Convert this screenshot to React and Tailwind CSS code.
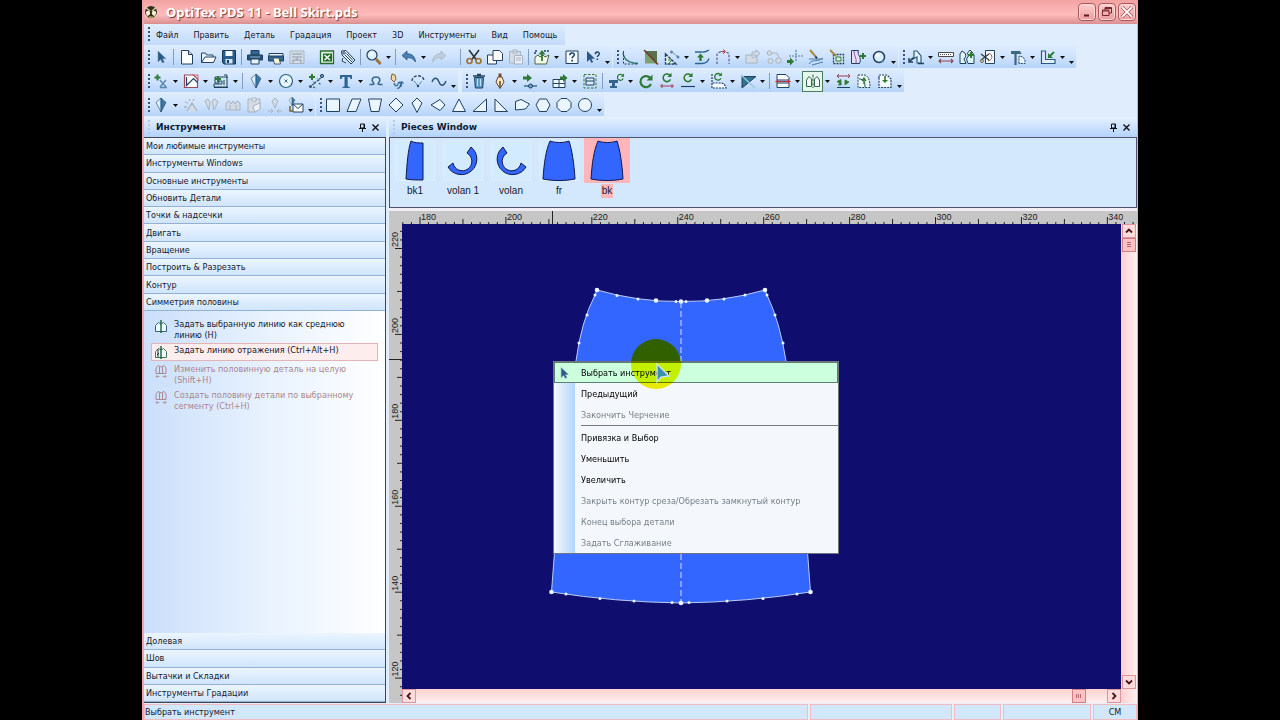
import { useState } from "react";

const NAVY = "#1f4263";
const GREEN = "#2c7a34";
const PALE = "#eaf5ff";
const GREY = "#a9b4c2";
const GREYFILL = "#d3dbe5";

const G = ({ children, s = NAVY, f = "none", w = 1 }) => (
  <g stroke={s} fill={f} strokeWidth={w}>
    {children}
  </g>
);

const PlusMark = ({ x, y }) => (
  <path d={`M${x - 3} ${y}h6M${x} ${y - 3}v6`} stroke={GREEN} strokeWidth="2" fill="none" />
);

const Dart = ({ a = "#3a7ba6", b = "#d6f0fc", s = NAVY }) => (
  <>
    <path d="M10 2 5 6.500 10 16z" fill={b} stroke={s} strokeWidth="0.6" />
    <path d="M10 2l5 4.500L10 16z" fill={a} stroke={s} strokeWidth="0.6" />
  </>
);

const Turn = ({ s = 1, x = 0, y = 0 }) => (
  <g transform={`translate(${x} ${y}) scale(${s})`}>
    <path d="M14.5 6.5A5.5 5.5 0 1 0 15 12" fill="none" stroke={GREEN} strokeWidth="2.2" />
    <path d="M16.5 2.5v6h-6z" fill={GREEN} />
  </g>
);

const icons = {
  arrow: <path d="M7 3v11l2.600-2.500L11.500 15l1.800-.9-1.800-3.400H15z" fill="#285a85" stroke="#6d8fae" strokeWidth="0.6" />,
  newFile: <G f="#fff"><path d="M4.500 2.500h7l4 4v9.500h-11z" /><path d="M11.500 2.500v4h4" fill="#b5d3ee" /></G>,
  open: <G f={PALE}><path d="M3.500 14.500V5h4l1 2H15v2" /><path d="M3.500 14.500 7 9h11l-2.500 5.500z" fill="#fff" /></G>,
  save: <><path d="M3.500 2.500h13v13.500H5L3.500 14.500z" fill="#2b5d8c" stroke="#173958" /><path d="M6.500 3h7v5h-7z" fill="#f4fbff" /><path d="M6.500 11h7v4.500h-7z" fill="#cfe3f4" /><path d="M8 12h2v3H8z" fill="#173958" /></>,
  printer: <><path d="M6 2.500h8V7H6z" fill="#356693" stroke={NAVY} /><path d="M2.500 7h15v5h-15z" fill="#264f78" stroke={NAVY} /><path d="M6 11h8v5H6z" fill="#e8f3ff" stroke={NAVY} /><path d="M5 9h10" stroke="#8fb2d2" /></>,
  plotter: <><path d="M3 5.500h14v3H3z" fill={PALE} stroke={NAVY} /><path d="M2.500 8h15v5h-15z" fill="#346591" stroke={NAVY} /><path d="M7 10h6l1.500 6h-6z" fill="#f7f3cf" stroke={NAVY} strokeWidth="0.8" /></>,
  card: <G s={GREY} f={GREYFILL}><path d="M3 3h14v12.500H3z" /><path d="M5 6h10M5 9h10M6 15v-3h8v3M10 9v3" stroke="#8d9aab" /></G>,
  excel: <><path d="M3.500 3h13v12.500h-13z" fill="#dff2de" stroke="#2c6a35" strokeWidth="1.300" /><path d="M6 5.500h9v8H6z" fill="#256b2e" /><path d="m7.500 7 5.500 5M13 7l-5.500 5" stroke="#fff" strokeWidth="1.400" /></>,
  tag: <G f={PALE}><path d="M3.500 3 8 2.500l9 9.500-4 4-9-9z" /><path d="M7 7l7 7M8.500 5.500l6.500 7" /><circle cx="6" cy="5" r="1.200" fill="#fff" /><path d="M5 10l-1 3 4 2" /></G>,
  zoom: <><circle cx="8" cy="7" r="5" fill="#dff3ff" stroke={NAVY} strokeWidth="1.200" /><path d="M6 7.500 9 4.500" stroke="#fff" strokeWidth="1.500" /><path d="m12 11 4.500 5" stroke="#a06e32" strokeWidth="2.800" /></>,
  undo: <path d="M3 7.500 8 3v2.800c5 0 8 2.500 8.500 8.200C14.500 10.800 12 9.500 8 9.600V12z" fill="#4b82b3" stroke="#285580" strokeWidth="0.800" />,
  redo: <path d="M17 7.500 12 3v2.800c-5 0-8 2.500-8.500 8.200C5.500 10.800 8 9.500 12 9.600V12z" fill="#c0cedd" stroke="#a4b6c9" strokeWidth="0.800" />,
  cut: <><path d="m5 2 7.500 10M15 2 7.500 12" stroke="#2f363d" strokeWidth="1.700" /><g fill="none" stroke="#9a7430" strokeWidth="1.600"><circle cx="5.500" cy="13" r="2.500" /><circle cx="14.500" cy="13" r="2.500" /></g></>,
  copy: <G f="#fff"><path d="M2.500 7h9v9h-9z" /><path d="M8 2.500h6.500l3 3v7H8z" /></G>,
  paste: <G s={GREY} f={GREYFILL}><path d="M3.500 3.500h11V15h-11z" /><path d="M7 2h4v3H7z" /><path d="M8.500 7.500h8V16h-8z" fill="#e9eef4" /><path d="M10 10h5M10 12h5" /></G>,
  exportPiece: <><path d="M3 9l3-2 2 2 3-2 2 2 4-2-2.500 9H3z" fill="#f2f8ec" stroke="#58683e" /><path d="M10 13V5" stroke={GREEN} strokeWidth="1.800" /><path d="M10 2 6.500 6.500h7z" fill={GREEN} /><path d="M3 6V3h3M12 3h5" stroke={NAVY} strokeWidth="1.500" strokeDasharray="2 1" /></>,
  help: <><path d="M4 3h12v12.500H4z" fill="#f5faff" stroke={NAVY} /><path d="M7.800 7.200c0-3 4.600-3 4.600-.4 0 1.500-2.300 1.600-2.300 3.400" fill="none" stroke={NAVY} strokeWidth="1.500" /><path d="M9.300 11.800h1.700v1.600H9.300z" fill={NAVY} /></>,
  whatsThis: <><path d="M4 3v11l2.600-2.500L8.500 15l1.600-.9-1.700-3.400H12z" fill="#285a85" /><path d="M12.300 6.200c0-2.900 4-2.900 4-.3 0 1.500-2 1.600-2 3.100" fill="none" stroke={NAVY} strokeWidth="1.400" /><path d="M13.600 10.500h1.500V12h-1.500z" fill={NAVY} /></>,

  curve: <><path d="M3 5C4 12 9 15 18 15.500" fill="none" stroke="#2b7260" strokeWidth="1.400" /><path d="M3.500 3v13H18" stroke={NAVY} strokeDasharray="2 1.500" fill="none" /></>,
  colorSwap: <><path d="M4 3h12v12.500z" fill="#5b6f48" /><path d="M4 3v12.500h12z" fill="#7fa070" /><path d="M3 2l14 14.500" stroke="#6b3a2a" strokeWidth="1.600" /></>,
  measure: <><path d="M3.500 6v10H14z" fill="#dff0e8" stroke={NAVY} strokeWidth="1.400" strokeDasharray="3 1" /><path d="m9 3 8 7" stroke="#477a9f" strokeDasharray="2 1" /><circle cx="9.500" cy="4" r="1.500" fill="#5588ad" /><circle cx="16" cy="9" r="1.500" fill="#5588ad" /><path d="M6 12h4l-3 3" stroke={GREEN} fill="none" /></>,
  merge: <><path d="M3 4h6c4 1 6-1 8-2M3 15.500h7c4 0 6-2 7-5" fill="none" stroke="#29639a" strokeWidth="1.300" /><path d="M8.500 13V9" stroke={GREEN} strokeWidth="2.400" /><path d="M8.500 5.500 5 9.500h7z" fill={GREEN} /></>,
  arch: <><path d="M4 16V6c2-3 10-3 12 0v10" fill="none" stroke="#5f5b93" strokeDasharray="2.500 1.500" strokeWidth="1.200" /><path d="M8 3.500h4M10 1.500l2.500 2L10 6" stroke="#b5434d" fill="none" /></>,
  greyPiece: <G s={GREY} f={GREYFILL}><path d="M3 7h5l2 3 4-2v7H3z" /><path d="M9 4h4V2l4 3.500-4 3V7H9z" /></G>,
  greyGroup: <G s={GREY} f={GREYFILL}><circle cx="5.500" cy="5" r="2.300" /><circle cx="6.500" cy="13" r="2.500" /><circle cx="14.500" cy="12.500" r="2.800" /><path d="M8 5h5l2 4" /></G>,
  crossPlus: <><path d="M11 2v12M4 8h14" stroke="#57839f" strokeDasharray="2 1" strokeWidth="1.200" /><path d="M2 12h3v-2.500l4 4-4 4V15H2z" fill={GREEN} /></>,
  drawLine: <><path d="M3 16c4-6 8-1 14-6M3 11h14M6 17l11-3" fill="none" stroke="#4a7da5" /><path d="m4 2 6 7" stroke="#a88b3f" strokeWidth="2" /><path d="m9.500 8.500 1.500 2" stroke={NAVY} strokeWidth="2" /></>,
  drawSelect: <><path d="M6.500 6.500h10v9h-10z" fill="#d7eaf2" stroke={NAVY} strokeDasharray="2 1" strokeWidth="1.300" /><path d="M9 9h5v4H9z" fill="none" stroke={GREEN} /><path d="m3 2 6 6" stroke="#a88b3f" strokeWidth="1.800" /></>,
  addPiece: <><path d="M3.500 2.500h7c-2 4 4 7 1 13h-8z" fill="#e9ddf5" stroke={NAVY} /><path d="M6 3c0 5 3 7 2 12" fill="none" stroke="#8065a5" /><PlusMark x={15} y={8} /></>,
  ring: <><circle cx="10" cy="9" r="5.500" fill="#dcefff" stroke={NAVY} strokeWidth="1.500" /><circle cx="8.500" cy="7" r="2" fill="#fff" /><path d="M12 14.500l3-2" stroke="#6088ad" strokeWidth="1.500" /></>,

  walk: <><path d="M5 12l3-3V3h3l4 5v7h-4V9z" fill="#e4f3f7" stroke="#325b7b" strokeWidth="1.200" /><path d="M3 10v4h4M3 14l4-4M12 15.500h6" stroke={NAVY} strokeWidth="1.500" fill="none" /></>,
  ruler: <><path d="M2.500 4.500h15v4h-15z" fill="#fff" stroke="#494a4b" /><path d="M4 6.500h12" stroke="#494a4b" strokeDasharray="1 1" /><path d="M3 13h14M5 11l-2 2 2 2M15 11l2 2-2 2" stroke="#934350" fill="none" strokeWidth="1.100" /></>,
  pieces: <G f="#e2f6f8"><path d="M3 15.500V6l2-3 3 2 1 3-2 3 2 4.500z" /><path d="M11 15.500 9.500 11l2-3-1-3 2.500-3 2 2 2 3v8.500z" /><PlusMark x={14} y={7} /></G>,
  cutPiece: <><path d="M7.500 2.500h9v13h-9z" fill="#fff" stroke={NAVY} /><path d="M10 13c5-1 5-6 1-8" fill="none" stroke="#a25546" /><path d="m3 6 8 6M3 12l8-6" stroke="#2f363d" strokeWidth="1.200" /><circle cx="4" cy="13" r="1.500" fill="none" stroke="#8c6930" /></>,
  hammer: <><path d="M3 3h9l1.500 3H3z" fill="#3d6585" /><path d="M7.500 5v12" stroke="#3d6585" strokeWidth="2.200" /><path d="M11 15.500V8l4 1 2 3v3.500z" fill="#eaf7ff" stroke={NAVY} strokeDasharray="2 1" /></>,
  corner: <><path d="M3.500 3h4v8.500H17v4H3.500z" fill="#dff0ff" stroke="#285a85" strokeWidth="1.200" /><path d="m16 4-4 4" stroke={GREEN} strokeWidth="1.800" /><path d="M10 10V5l5 5z" fill={GREEN} /></>,

  plusCross: <><PlusMark x={6.500} y={5.500} /><path d="m9 8 6 7M15 8l-6 7M9 15.500h7" stroke="#5a87ad" strokeWidth="1.400" /></>,
  pageCut: <><path d="M3.500 3h9l4 4v8.500h-13z" fill="#fff" stroke="#9a4a58" strokeWidth="1.200" /><path d="M5.500 5v8.500l7-7 4 4" fill="none" stroke={NAVY} strokeWidth="1.200" /><path d="M11 3h6v6" stroke="#d5636d" fill="none" /></>,
  machine: <><path d="M4 5h12v10H3v-3h8V9H8v2H4z" fill="#cfe4f2" stroke={NAVY} /><path d="M13 8v5M3 15.500h14" stroke={NAVY} /><PlusMark x={7} y={7} /><path d="M13 3h3v3" stroke={NAVY} fill="none" /></>,
  dart: <Dart />,
  circle: <><circle cx="10" cy="9" r="6.500" fill="#e8f7ff" stroke="#2c6384" strokeWidth="1.200" /><path d="m8.500 7.500 3 3M11.500 7.500l-3 3" stroke="#3a7396" /></>,
  nodes: <><path d="M4 15 17 4M9 12l-2-3M13 9l-2-3M7 15l3 1M13 11l2 2" stroke="#35597a" strokeDasharray="2 1" strokeWidth="1.300" /><circle cx="4.500" cy="14.500" r="1.500" fill="#35597a" /><circle cx="16" cy="4" r="1.600" fill="#6c98bd" stroke={NAVY} /><PlusMark x={6} y={5} /></>,
  letter: <path d="M4 3h12v4h-1.500L13.500 5H11.700v9.500l2 .5v1H6.500v-1l2-.5V5H6.500L5.500 7H4z" fill="#2d6594" />,
  omega: <path d="M3.500 12.500c4 0 5 0 4-1.500C5 8 6 5 10 5s5 3 2.500 6c-1 1.500 0 1.500 4 1.500" fill="none" stroke="#31658c" strokeWidth="1.500" />,
  swirl: <><path d="M5 2l3 1 1 4-2 3-3-3z" fill="#f1d8a6" stroke="#7d6136" /><path d="M7 11c1 4 4 3 4 1s4-3 3 0-2 5-4 4M12 11h5M15 9l-1 6" fill="none" stroke="#31658c" strokeWidth="1.200" /></>,
  dottedArc: <><path d="M4 9c0-7 12-7 12 0" fill="none" stroke={NAVY} strokeWidth="1.300" strokeDasharray="3 1.500" /><path d="m6 9 4 5 4-5" fill="none" stroke="#31658c" strokeDasharray="2 1" /><circle cx="10" cy="14" r="1.200" fill={NAVY} /></>,
  wave: <path d="M3 10c2-5 5-5 7 0s5 4 7-1" fill="none" stroke="#2b5478" strokeWidth="1.400" />,

  trash: <><path d="M5.500 5.500h9L13.700 16H6.300z" fill="#5e99c6" stroke={NAVY} /><path d="M4 4h12M8 2.500h4" stroke={NAVY} strokeWidth="1.500" /><path d="M8.500 7v7M11.500 7v7" stroke="#c5e2f5" /></>,
  pen: <><path d="M8.500 1.500h3V5h-3z" fill="#704b2e" /><path d="M8 5h4l2 5-4 6.500L6 10z" fill="#fae6c0" stroke="#61462c" /><path d="M10 9v7" stroke="#61462c" strokeWidth="1.500" /></>,
  moveNode: <><path d="M3 4.500h4V2l5 4-5 4V7.500H3z" fill={GREEN} /><path d="M4 14h13" stroke="#2b6086" strokeWidth="1.300" /><circle cx="10.500" cy="14" r="2" fill="#6ca1cb" stroke={NAVY} /></>,
  moveGrid: <><path d="M3 7.500h12v8H3zM3 11.500h12M9 7.500v8" fill="#eef7ff" stroke={NAVY} /><path d="M10 4.500h3V2l4.500 4L13 10V7.500h-3z" fill={GREEN} /></>,
  selectBox: <><path d="M4 2.500h12v13.500H4z" fill="none" stroke={GREEN} strokeDasharray="2.500 1.500" /><path d="M6 6h8v7H6zM6 9h8" fill="#dcebf8" stroke={NAVY} /></>,
  rotateText: <><path d="M3 8h9v3H9v3h2v2H4v-2h2v-3H3z" fill="#32648e" /><Turn s={0.55} x={9} y={0} /></>,
  turn: <Turn />,
  turnRed: <><Turn s={0.7} x={3} y={-1} /><path d="M3 14h14M5 12v4M15 12v4" stroke="#a73f4c" /></>,
  turnLine: <><Turn s={0.7} x={3} y={-1} /><path d="M3 14.500h14" stroke={NAVY} strokeWidth="1.200" /></>,
  turnPiece: <><path d="M4 2v14h14c-1-4-3-5-6-5H4" fill="#f2faff" stroke={NAVY} strokeDasharray="2 1" strokeWidth="1.200" /><Turn s={0.600} x={4} y={-1} /></>,
  flip: <><path d="M4 4.500h14L4 16z" fill="#2e7390" stroke={NAVY} /><path d="m3 3 14 13" stroke="#9cc7dc" strokeWidth="1.500" /></>,
  foldPage: <><path d="M4 2.500h9l3 3V8H4zM4 11h12v4.500H4z" fill="#fff" stroke={NAVY} /><path d="M3 9.500h14M5 8l-2 1.500L5 11M15 8l2 1.500-2 1.500" stroke="#b63b3f" fill="none" strokeWidth="1.200" /></>,
  mirror: <><path d="M8.500 14.500h-5V8L6 4.500 8.500 7zM11.500 14.500h5V8L14 4.500 11.500 7z" fill="#f4fffa" stroke="#2d6848" /><path d="M10 2.500v13.500" stroke="#27553a" strokeDasharray="3 1" /></>,
  swapPieces: <><path d="M4 4h13M6 2l-2 2 2 2M15 2l2 2-2 2" stroke="#91434d" fill="none" /><path d="M4 15.500h13" stroke={NAVY} /><path d="M4 9.500l4-2v5zM8 11v2H5M16 10l-4-2v5z" fill={GREEN} stroke={GREEN} strokeWidth="0.800" /></>,
  piecePath: <><path d="M4 3h7c4 2 5 6 5 12.500H4z" fill="#edf8f4" stroke={NAVY} strokeDasharray="2 1" /><path d="M5 7c5 0 6 3 6 8" fill="none" stroke={NAVY} /><path d="M10 12V7M8 9l2-3 2 3" stroke={GREEN} fill="none" strokeWidth="1.300" /></>,
  pieceDown: <><path d="M4 6V3h8l4 4v8.500H4V6" fill="#f4faff" stroke={NAVY} strokeDasharray="2 1" strokeWidth="1.200" /><path d="M10 4v4" stroke={GREEN} strokeWidth="1.600" /><path d="M7 8h6l-3 3z" fill={GREEN} /></>,

  wand: <G s={GREY} f={GREYFILL} w={1.3}><path d="m6 15 5-8 5 8M8 3l1 2M13 3l-1 2M4 6l3 1M3 11h3" /></G>,
  greyDarts: <G s={GREY} f={GREYFILL}><path d="M6 3 3 5l4 9 1-8zM13 3l-3 2 2 9 4-8z" /></G>,
  greyMirror: <G s={GREY} f={GREYFILL}><path d="M3 14V7l3-2 2 3 2-3 2 3 2-3 3 2v7zM7 9v5M13 9v5" /></G>,
  greyPage: <G s={GREY} f={GREYFILL}><path d="M4 3h12v9l-4 4H4z" /><path d="M8 2h4v3H8zM9 10l7-3v6l-5 3z" fill="#eef2f7" /></G>,
  greyDart: <G s={GREY} f={GREYFILL}><path d="M10 2 7 5l3 7 3-7zM3 15h5M12 15h5M6 13l2 2-2 2M14 13l-2 2 2 2" /></G>,
  dartMail: <><g transform="scale(.6)"><Dart /></g><path d="M7 8h10v8H7z" fill="#fff" stroke={NAVY} /><path d="m7 8 5 4.500L17 8" fill="none" stroke={NAVY} /><path d="M4 10v5h3" stroke="#7a5f31" fill="none" strokeWidth="1.500" /></>,

  square: <G f={PALE}><path d="M3.500 3h13v12.500h-13z" /></G>,
  parallelogram: <G f={PALE}><path d="M8 3h9l-5 12.500H3z" /></G>,
  trapezoid: <G f={PALE}><path d="M3.500 3h13L14 15.500H6z" /></G>,
  diamond: <G f={PALE}><path d="m10 2 7 7-7 7-7-7z" /></G>,
  kite: <G f={PALE}><path d="m10 2 5 5-5 9.500L5 7z" /></G>,
  flatKite: <G f={PALE}><path d="M12 3.500 17 9l-5 5.500L3 9z" /></G>,
  triangle: <G f={PALE}><path d="m10 3 6.500 12.500h-13z" /></G>,
  rightA: <G f={PALE}><path d="M16.500 3v12.500H3z" /></G>,
  rightB: <G f={PALE}><path d="M4 3v12.500h12.500z" /></G>,
  pentagon: <G f={PALE}><path d="M3.500 5.500 9 3.500 17.500 8l-4 5-10 1z" /></G>,
  hexagon: <G f={PALE}><path d="M6.500 3h7L17 9l-3.500 6.500h-7L3 9z" /></G>,
  octagon: <G f={PALE}><path d="M7 2.500h6l4 4v5l-4 4H7l-4-4v-5z" /></G>,
  roundShape: <G f={PALE}><circle cx="10" cy="9" r="6.500" /></G>,
};

// "|" is a separator, "v" a drop-down arrow, "_" a blank slot, "!" before a name marks the active tool
const toolRows = [
  {
    gap: "gap-px",
    groups: [
      "arrow | newFile open save | printer plotter card _ excel tag | zoom v | undo v redo _ | cut copy paste | exportPiece v help whatsThis",
      "curve colorSwap measure v merge arch v greyPiece greyGroup crossPlus drawLine drawSelect addPiece ring",
      "walk v ruler pieces cutPiece v hammer v corner v",
    ],
  },
  {
    gap: "gap-1",
    groups: [
      "plusCross v pageCut v machine v | dart v circle v nodes v letter v omega swirl dottedArc wave",
      "trash pen v moveNode v moveGrid v selectBox | rotateText v turn turnRed turnLine v turnPiece v flip v | foldPage v !mirror v swapPieces piecePath pieceDown",
    ],
  },
  {
    gap: "gap-px",
    groups: [
      "dart v wand greyDarts greyMirror greyPage greyDart dartMail",
      "square parallelogram trapezoid diamond kite flatKite triangle rightA rightB pentagon hexagon octagon roundShape",
    ],
  },
];

const Caret = () => (
  <svg width="5" height="3" viewBox="0 0 5 3">
    <path d="M0 0h5L2.500 3z" fill="#111" />
  </svg>
);

const Grip = ({ color = "#3c5573" }) => (
  <svg width="6" height="15" viewBox="0 0 6 15" className="shrink-0">
    <path d="M4 1h2M4 5h2M4 9h2M4 13h2" stroke={color} strokeWidth="2" />
  </svg>
);

const ToolGroup = ({ spec }) => (
  <div className="flex h-[22px] items-center bg-linear-to-b from-[#dcebff] via-[#cfe3fd] to-[#b5d3f7]">
    <Grip />
    {spec.split(" ").map((token, i) => {
      if (token === "|") return <span key={i} className="ml-0.5 mr-0.5 h-4 w-px bg-[#7e9dc2]" />;
      if (token === "_") return <span key={i} className="w-[9px]" />;
      if (token === "v")
        return (
          <button key={i} aria-label="Список" className="flex h-[21px] w-[9px] items-center justify-center">
            <Caret />
          </button>
        );
      const active = token[0] === "!";
      const name = active ? token.slice(1) : token;
      return (
        <button
          key={i}
          aria-label={name}
          className={`flex h-[21px] w-[21px] items-center justify-center ${
            active ? "border border-[#4c7b62] bg-[#e4f8ee]" : ""
          }`}
        >
          <svg width="20" height="18" viewBox="0 0 20 18" className="shrink-0" fill="none">
            {icons[name]}
          </svg>
        </button>
      );
    })}
    <button aria-label="Ещё" className="flex h-[21px] w-[9px] items-end justify-center pb-1">
      <Caret />
    </button>
  </div>
);

const TitleButton = ({ label, children }) => (
  <button
    aria-label={label}
    className="flex h-[18px] w-[18px] items-center justify-center rounded-sm border border-[#a8575c] bg-linear-to-b from-[#fbd0d0] to-[#ee9a9c] shadow-[inset_0_0_0_1px_#ffd9d9]"
  >
    <svg width="14" height="14" viewBox="0 0 14 14" fill="none">
      {children}
    </svg>
  </button>
);

const TitleBar = () => (
  <header className="flex h-6 items-center bg-linear-to-b from-[#f2a2a2] via-[#ffbcbc] via-60% to-[#d98f8f] pr-px">
    <svg width="14" height="14" viewBox="0 0 14 14">
      <circle cx="7" cy="7" r="6" fill="#33301f" />
      <path d="M1 2l5 4M13 2 8 6M2 12l3-3M12 12 9 9" stroke="#d8cfa0" strokeWidth="1.500" />
      <circle cx="4" cy="8" r="2.200" fill="#f4efd2" />
      <circle cx="10" cy="8" r="2.200" fill="#f4efd2" />
      <path d="M5 12h4" stroke="#b8a45a" strokeWidth="1.500" />
    </svg>
    <h1 className="ml-2 flex-1 font-['Noto_Sans','Open_Sans',sans-serif] text-[13px] font-bold leading-4 text-white [text-shadow:1px_1px_1px_#7a3a3a]">
      OptiTex PDS 11 - Bell Skirt.pds
    </h1>
    <div className="flex gap-0.5">
      <TitleButton label="Свернуть">
        <path d="M4 10.500h5" stroke="#5d1f24" strokeWidth="2" />
      </TitleButton>
      <TitleButton label="Восстановить">
        <path d="M5 5V2.500h6.500V8H9M2.500 5H9v5.500H2.500zM5 3.500h6M3 6h6" stroke="#74282e" />
      </TitleButton>
      <TitleButton label="Закрыть">
        <path d="m2 2 10 10M12 2 2 12" stroke="#74282e" strokeWidth="3" />
        <path d="m2 2 10 10M12 2 2 12" stroke="#fff" strokeWidth="1.800" />
      </TitleButton>
    </div>
  </header>
);

const menus = ["Файл", "Править", "Деталь", "Градация", "Проект", "3D", "Инструменты", "Вид", "Помощь"];

const MenuBar = () => (
  <nav className="flex h-[21px]">
    <div className="flex items-center bg-linear-to-b from-[#dfedff] to-[#c3dbf9] pr-2">
      <Grip />
      <div className="flex gap-[15px] pl-1.5">
        {menus.map((m) => (
          <button key={m}>{m}</button>
        ))}
      </div>
    </div>
  </nav>
);

const PanelHeader = ({ title }) => (
  <div className="flex h-5 items-center bg-linear-to-b from-[#e6f1ff] to-[#b3d3fb] pr-1.5">
    <Grip color="#b4c9e3" />
    <h2 className="ml-1.5 flex-1 font-['DejaVu_Sans',sans-serif] text-[9px] font-bold text-[#0c1c33]">{title}</h2>
    <button aria-label="Закрепить" className="mr-1">
      <svg width="9" height="9" viewBox="0 0 9 9" fill="none">
        <path d="M2.500 1h4v4h-4zM1 5.500h7M4.500 5.500V9M6 1v4" stroke="#111" />
      </svg>
    </button>
    <button aria-label="Закрыть панель">
      <svg width="9" height="9" viewBox="0 0 9 9">
        <path d="m1.500 1.500 6 6M7.500 1.500l-6 6" stroke="#111" strokeWidth="1.400" />
      </svg>
    </button>
  </div>
);

const topSections = [
  "Мои любимые инструменты",
  "Инструменты Windows",
  "Основные инструменты",
  "Обновить Детали",
  "Точки & надсечки",
  "Двигать",
  "Вращение",
  "Построить & Разрезать",
  "Контур",
  "Симметрия половины",
];
const bottomSections = ["Долевая", "Шов", "Вытачки и Складки", "Инструменты Градации"];

const symmetryTools = [
  { text: "Задать выбранную линию как среднюю линию (H)", kind: "line" },
  { text: "Задать линию отражения (Ctrl+Alt+H)", kind: "mirror" },
  { text: "Изменить половинную деталь на целую (Shift+H)", kind: "off" },
  { text: "Создать половину детали по выбранному сегменту (Ctrl+H)", kind: "off" },
];

const SymmetryIcon = ({ kind }) => (
  <svg width="14" height="15" viewBox="0 0 14 15" fill="none" className="mt-px shrink-0">
    {kind === "off" ? (
      <g stroke="#a98a92">
        <path d="M2 9.500V4l2-2.500L7 3l3-1.500L12 4v5.500zM5.500 3v6.500M8.500 3v6.500" />
        <path d="M1.500 12.500h4M3 11v3M8.500 12.500h4M11 11v3" stroke="#b59aa2" />
      </g>
    ) : (
      <>
        <path d="M1.500 12.500v-6l3-3L7 5l2.500-1.500 3 3v6z" fill="#f0fbff" stroke={kind === "mirror" ? "#47775a" : "#33617f"} />
        <path d="M7 1v13" stroke="#14603c" strokeWidth="1.400" />
        {kind === "mirror" && <path d="M4 4v8M5 8l-2 2" stroke="#222" />}
      </>
    )}
  </svg>
);

const Section = ({ name }) => (
  <button className="flex w-full flex-1 items-center border-b border-[#93b2d2] bg-linear-to-b from-[#ecf5ff] to-[#d0e5fb] pl-0.5 text-left">
    {name}
  </button>
);

const ToolsPanel = () => {
  const [selected, setSelected] = useState(1);

  return (
    <aside className="flex w-[242px] shrink-0 flex-col">
      <PanelHeader title="Инструменты" />
      <div className="flex flex-1 flex-col border-b border-r border-t border-[#44444f]">
        <div className="flex h-[173px] flex-col">
          {topSections.map((s) => (
            <Section key={s} name={s} />
          ))}
        </div>
        <div className="flex flex-1 flex-col gap-px bg-linear-to-r from-[#cbdffb] via-[#e8f2fe] to-white px-[7px] pt-1.5">
          {symmetryTools.map((t, i) => (
            <button
              key={t.text}
              onClick={() => setSelected(i)}
              className={`flex gap-1.5 border pl-0.5 pr-4 text-left leading-[11px] ${
                selected === i ? "border-[#e2b4b8] bg-[#fdeded]" : "border-transparent"
              } ${t.kind === "off" ? "text-[#a9868e]" : ""}`}
            >
              <SymmetryIcon kind={t.kind} />
              <span className="pt-px">{t.text}</span>
            </button>
          ))}
        </div>
        <div className="flex h-[69px] flex-col">
          {bottomSections.map((s) => (
            <Section key={s} name={s} />
          ))}
        </div>
      </div>
    </aside>
  );
};

const skirt = "M14 2c5 2 14 2 19 0 3 9 5 22 6 38-10 2-22 2-32 0C8 24 10 11 14 2z";
const pieces = [
  { name: "bk1", d: "M19 2c3 2 8 2 12 2v37c-6 0-12 0-17-1C15 24 16 11 19 2z" },
  { name: "volan 1", d: "M31 8A15.500 15.500 0 1 1 8 28l5-4A9.500 9.500 0 1 0 27 14z" },
  { name: "volan", d: "M15 8A15.500 15.500 0 1 0 38 28l-5-4A9.500 9.500 0 1 1 19 14z" },
  { name: "fr", d: skirt },
  { name: "bk", d: skirt },
];

const PiecesList = () => (
  <div className="flex h-[71px] gap-0.5 border border-[#55536a] bg-[#d3e7fd] pl-0.5">
    {pieces.map((p) => {
      const on = p.name === "bk";
      return (
        <button key={p.name} className="flex w-[46px] flex-col items-center font-['Liberation_Sans',Arial,sans-serif] text-[10px] leading-[14px]">
          <span className={`flex h-[45px] w-full items-center justify-center ${on ? "bg-[#ffb6ba]" : ""}`}>
            <svg width="46" height="43" viewBox="0 0 46 43">
              {!on && <path d="M3.500 1.500h39v40h-39z" fill="#d3ebfe" stroke="#dfeefe" />}
              <path d={p.d} fill="#3366ff" stroke="#10184a" />
            </svg>
          </span>
          <span className={`mt-px ${on ? "bg-[#ffb6ba] px-px" : ""}`}>{p.name}</span>
        </button>
      );
    })}
  </div>
);

const STEP = 4.296; // pixels per centimetre

const TopRuler = () => {
  const ticks = [];
  for (let cm = 176; cm <= 346; cm += 2) ticks.push(cm);
  return (
    <svg height="13" className="w-full bg-[#c6c6c6]">
      {ticks.map((cm) => {
        const x = 31 + (cm - 180) * STEP;
        const y = cm % 20 === 0 ? 6 : cm % 10 === 0 ? 8 : 11;
        return <path key={cm} d={`M${x} ${y}V13`} stroke="#222" />;
      })}
      {ticks.filter((cm) => cm % 20 === 0).map((cm) => (
        <text key={cm} x={32 + (cm - 180) * STEP} y="9" fontSize="9" fontFamily="Liberation Sans, Arial, sans-serif" fill="#222">
          {cm}
        </text>
      ))}
      <path d="M163.500 0V13" stroke="#222" />
    </svg>
  );
};

const SideRuler = () => {
  const ticks = [];
  for (let cm = 226; cm >= 116; cm -= 2) ticks.push(cm);
  return (
    <svg width="13" className="h-full shrink-0 bg-[#c6c6c6]">
      {ticks.map((cm) => {
        const y = 24.500 + (220 - cm) * STEP;
        const x = cm % 20 === 0 ? 6 : cm % 10 === 0 ? 8 : 11;
        return <path key={cm} d={`M${x} ${y}H13`} stroke="#222" />;
      })}
      {ticks.filter((cm) => cm % 20 === 0).map((cm) => (
        <text
          key={cm}
          transform={`translate(9 ${23 + (220 - cm) * STEP}) rotate(-90)`}
          fontSize="9"
          fontFamily="Liberation Sans, Arial, sans-serif"
          fill="#222"
        >
          {cm}
        </text>
      ))}
      <path d="M0 135.500H13" stroke="#222" />
    </svg>
  );
};

const bigDots = [[195, 66], [254, 76.5], [279, 77.5], [305, 76.5], [363, 66], [149.5, 368], [279, 379], [408.5, 368]];
const smallDots = [
  [215, 71.5], [236, 75], [274, 77.5], [284, 77.5], [322, 75], [343, 71],
  [193, 71], [185, 91], [177, 119], [365, 71], [373, 91], [381, 119],
  [164, 370], [198, 374.5], [232, 377], [270, 378.5], [287, 378.5], [325, 377], [361, 374.5], [395, 370],
];

const SkirtDrawing = () => (
  <svg width="560" height="400" viewBox="0 0 560 400" className="absolute left-0 top-0" fill="none">
    <path
      d="M195 66Q237 78 279 77.500Q321 78 363 66L365 71Q378 98 384 137Q400 240 408.500 368Q345 378 279 379Q213 378 149.500 368Q158 240 174 137Q179 98 193 71z"
      fill="#3366ff"
      stroke="#b8ccf8"
    />
    <path d="M279 78V379" stroke="#b8ccf8" strokeWidth="1.200" strokeDasharray="6 3" />
    <g fill="#eaf6ff">
      {bigDots.map(([x, y]) => <circle key={`${x}-${y}`} cx={x} cy={y} r="2.300" />)}
      {smallDots.map(([x, y]) => <circle key={`${x}-${y}`} cx={x} cy={y} r="1.500" />)}
    </g>
  </svg>
);

const menuTop = [
  { text: "Выбрать инструмент", active: true },
  { text: "Предыдущий" },
  { text: "Закончить Черчение", off: true },
];
const menuBottom = [
  { text: "Привязка и Выбор" },
  { text: "Уменьшить" },
  { text: "Увеличить" },
  { text: "Закрыть контур среза/Обрезать замкнутый контур", off: true },
  { text: "Конец выбора детали", off: true },
  { text: "Задать Сглаживание", off: true },
];

const MenuItem = ({ text, active, off }) => (
  <button
    role="menuitem"
    disabled={off}
    className={`flex h-[21px] w-full items-center border text-left ${
      active ? "border-[#5d7f74] bg-[#ccffdd]" : "border-transparent"
    } ${off ? "text-[#757e88]" : "text-black"}`}
  >
    <span className="flex w-[26px] shrink-0">
      {active && (
        <svg width="16" height="16" viewBox="0 0 18 18">
          {icons.arrow}
        </svg>
      )}
    </span>
    {text}
  </button>
);

const ContextMenu = () => (
  <div
    role="menu"
    className="absolute left-[151px] top-[137px] w-[286px] border border-[#6f7480] bg-[linear-gradient(to_right,#f5f9fd,#b4d5fb_21px,#f4f8fc_21px)]"
  >
    {menuTop.map((m) => <MenuItem key={m.text} {...m} />)}
    <hr className="mb-px ml-[27px] border-[#73777e]" />
    {menuBottom.map((m) => <MenuItem key={m.text} {...m} />)}
  </div>
);

const Pointer = () => (
  <>
    <div className="absolute left-[229px] top-[115px] h-[50px] w-[50px] rounded-full bg-[#f4f000] mix-blend-multiply" />
    <svg width="16" height="24" viewBox="0 0 16 24" className="absolute left-[253px] top-[138px]">
      <path d="M2 2v18l4-5 8-1z" fill="#3f8fae" stroke="#cfe6f4" strokeWidth="1.300" />
    </svg>
  </>
);

const ScrollButton = ({ label, d }) => (
  <button aria-label={label} className="flex h-[14px] w-[14px] shrink-0 items-center justify-center border border-[#dd979c] bg-[#ffdcdc]">
    <svg width="8" height="8" viewBox="0 0 8 8" fill="none">
      <path d={d} stroke="#4a1418" strokeWidth="1.800" />
    </svg>
  </button>
);

const Thumb = ({ d }) => (
  <span className="flex h-[14px] w-[14px] shrink-0 items-center justify-center border border-[#cf7f85] bg-[#ffc2c4]">
    <svg width="8" height="8" viewBox="0 0 8 8">
      <path d={d} stroke="#b8666c" />
    </svg>
  </span>
);

const Workspace = () => (
  <main className="flex min-w-0 flex-1 flex-col">
    <PanelHeader title="Pieces Window" />
    <PiecesList />
    <div className="flex min-h-0 flex-1 flex-col border-t-[3px] border-[#f3eef6]">
      <TopRuler />
      <div className="flex min-h-0 flex-1">
        <SideRuler />
        <div className="flex min-w-0 flex-1 flex-col">
          <div className="relative isolate flex-1 overflow-hidden bg-[#0f0d6e]">
            <SkirtDrawing />
            <ContextMenu />
            <Pointer />
          </div>
          <div className="flex h-[14px] bg-linear-to-b from-[#ffd0d0] to-[#fff0f0]">
            <ScrollButton label="Влево" d="M5.500 1 2.500 4l3 3" />
            <span className="flex-1" />
            <Thumb d="M1.500 2v4M3.500 2v4M5.500 2v4" />
            <span className="w-[21px]" />
            <ScrollButton label="Вправо" d="m2.500 1 3 3-3 3" />
          </div>
        </div>
        <div className="flex w-4 flex-col items-center bg-linear-to-r from-[#ffd0d0] to-[#fff0f0] pb-[14px]">
          <ScrollButton label="Вверх" d="m1 5.500 3-3 3 3" />
          <Thumb d="M2 1.500h4M2 3.500h4M2 5.500h4" />
          <span className="flex-1" />
          <ScrollButton label="Вниз" d="m1 2.500 3 3 3-3" />
        </div>
      </div>
    </div>
  </main>
);

const StatusBar = () => (
  <footer className="flex h-[17px] gap-0.5 bg-[#e8edf8] pt-px *:border *:border-[#efbcc4] *:bg-[#d3e7fb]">
    <span className="flex flex-1 items-center">Выбрать инструмент</span>
    <span className="w-[142px]" />
    <span className="w-[47px]" />
    <span className="w-[88px]" />
    <span className="flex w-[44px] items-center justify-center">СМ</span>
  </footer>
);

export default function App() {
  return (
    <div className="flex h-screen min-h-[600px] flex-col bg-black px-[142px] font-['DejaVu_Sans_Condensed','DejaVu_Sans',sans-serif] text-[9px] leading-3 text-[#14202e]">
      <div className="flex flex-1 flex-col border-l-2 border-r border-[#f0a6aa] bg-[#dfedfd]">
        <TitleBar />
        <MenuBar />
        {toolRows.map((row, i) => (
          <div key={i} className={`flex h-6 items-center ${row.gap}`}>
            {row.groups.map((g) => (
              <ToolGroup key={g} spec={g} />
            ))}
          </div>
        ))}
        <div className="flex min-h-0 flex-1 gap-[3px]">
          <ToolsPanel />
          <Workspace />
        </div>
        <StatusBar />
      </div>
    </div>
  );
}
